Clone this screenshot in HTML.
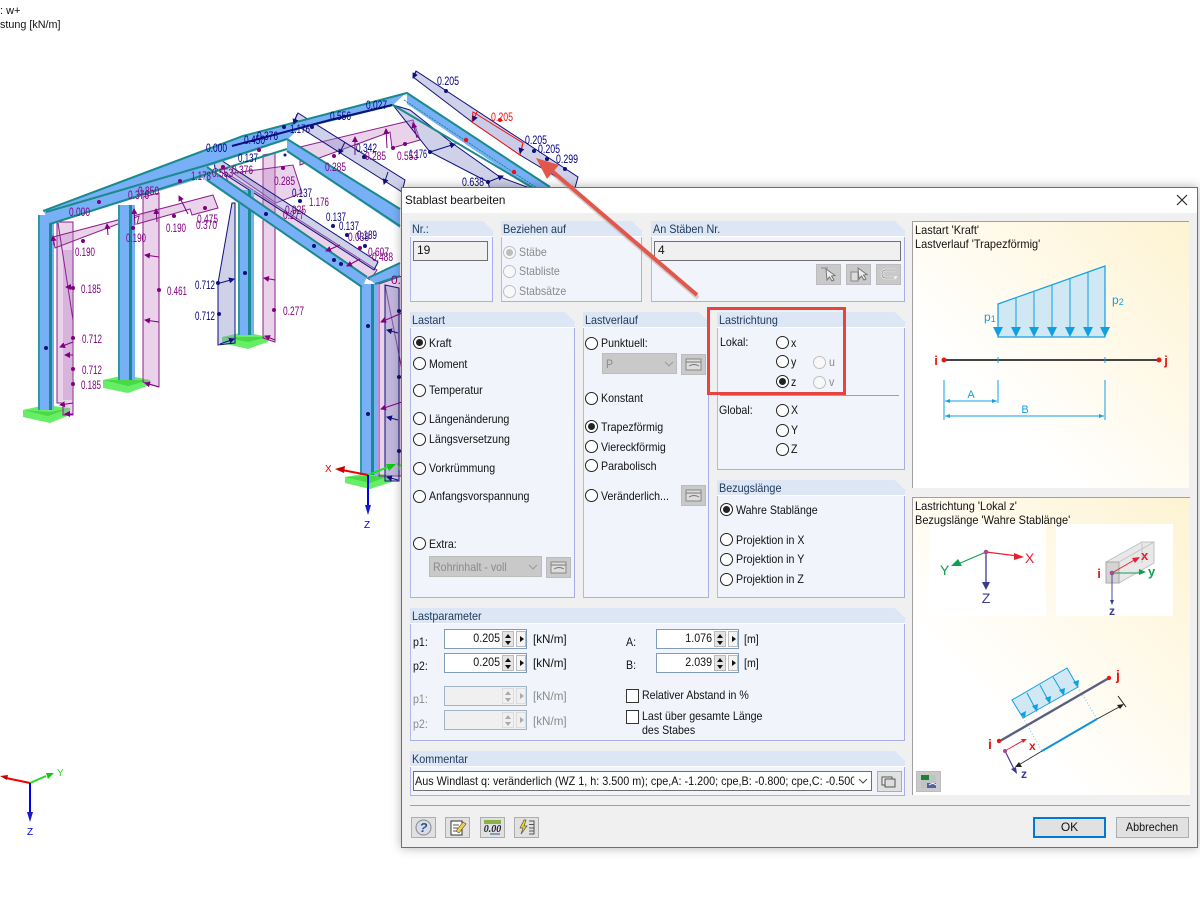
<!DOCTYPE html>
<html lang="de"><head><meta charset="utf-8"><title>Stablast bearbeiten</title>
<style>
html,body{margin:0;padding:0;background:#fff}
body{position:relative;width:1200px;height:900px;overflow:hidden;font-family:"Liberation Sans",sans-serif;font-size:12px;color:#111}
svg{position:absolute;left:0;top:0}
.a{position:absolute}
.t{position:absolute;line-height:14px;white-space:nowrap;transform:scaleX(.885);transform-origin:0 50%}
.v{transform:scaleX(.915)}
.u{transform:scaleX(.97)}
.d{color:#8a8a8a}
.p{position:absolute;box-sizing:border-box;background:#f1f4fa;border-left:1px solid #b3b8ea;border-right:1px solid #a9aee6;border-bottom:1px solid #a9aee6;clip-path:polygon(0 0,calc(100% - 10px) 0,100% 10px,100% 100%,0 100%)}
.h{position:absolute;left:-1px;right:-1px;top:0;height:15px;background:#dce6f4;border-bottom:1px solid #fff;color:#1e3a5a;line-height:16px;padding-left:2px}
.h span{display:inline-block;transform:scaleX(.9);transform-origin:0 50%;white-space:nowrap}
.r{position:absolute;box-sizing:border-box;width:13px;height:13px;border:1px solid #222;border-radius:50%;background:#fff}
.r.x{border-color:#c0c0c0;background:#f8f8f8}
.r.s:after{content:"";position:absolute;left:2px;top:2px;width:7px;height:7px;border-radius:50%;background:#222}
.r.x.s:after{background:#bdbdbd}
.f{position:absolute;box-sizing:border-box;border:1px solid #707070;background:#f0f0f0;line-height:17px;padding-left:3px;height:20px}
.b{position:absolute;box-sizing:border-box;width:25px;height:21px;background:#c9c9c9;border:1px solid #bcbcbc}
.e{background:#e1e1e1;border-color:#adadad}
.n{position:absolute;box-sizing:border-box;width:83px;height:20px;border:1px solid #7f9db9;background:#fff;line-height:17px;text-align:right;padding-right:26px}
.n b{display:inline-block;font-weight:normal;transform:scaleX(.89);transform-origin:100% 50%}
.n.o{background:#f0f0f0;border-color:#a0b4c8}
.sp{position:absolute;left:57px;top:1px;width:12px;height:16px;background:#e4e4e4;border:1px solid #bbb;box-sizing:border-box}
.sp i{position:absolute;left:2px;width:0;height:0;border-left:3px solid transparent;border-right:3px solid transparent}
.sp i:first-child{top:2px;border-bottom:4px solid #111}
.sp i:last-child{top:9px;border-top:4px solid #111}
.sq{position:absolute;left:71px;top:1px;width:10px;height:16px;background:#f4f4f4;border:1px solid #bbb;box-sizing:border-box}
.sq:after{content:"";position:absolute;left:3px;top:4px;border-left:4px solid #111;border-top:3px solid transparent;border-bottom:3px solid transparent}
.o .sp i:first-child{border-bottom-color:#aaa}.o .sp i:last-child{border-top-color:#aaa}.o .sq:after{border-left-color:#aaa}
.o .sp,.o .sq{border-color:#ddd;background:#f0f0f0}
.cb{position:absolute;box-sizing:border-box;width:13px;height:14px;border:1px solid #333;background:#fff}
.pv{position:absolute;box-sizing:border-box;border-top:1px solid #a0a0a0;border-left:1px solid #a0a0a0;background:linear-gradient(45deg,#fff 30%,#fff9e8 65%,#fdf3d2 100%)}
.btxt{position:absolute;box-sizing:border-box;text-align:center;height:21px;width:73px;line-height:19px;background:#e1e1e1}
.btxt span{display:inline-block;transform:scaleX(.9)}
.s3 text{font-size:11.5px;font-family:"Liberation Sans",sans-serif}
</style></head><body>

<div class="t" style="left:0;top:4px;font-size:11px;transform:none">: w+</div>
<div class="t" style="left:0;top:18px;font-size:11px;transform:scaleX(.98)">stung [kN/m]</div>

<svg class="s3" width="1200" height="900" viewBox="0 0 1200 900">
<defs>
<marker id="ap" markerWidth="7" markerHeight="7" refX="5" refY="3" orient="auto"><path d="M0 0L6 3L0 6Z" fill="#800080"/></marker>
<marker id="an" markerWidth="7" markerHeight="7" refX="5" refY="3" orient="auto"><path d="M0 0L6 3L0 6Z" fill="#10107a"/></marker>
</defs>
<!-- green bases -->
<g fill="#66ee66" stroke="none">
<path d="M23 410L45 405L70 408V415L50 423L23 417Z"/>
<path d="M103 380L125 375L150 380V385L128 393L103 388Z"/>
<path d="M222 337L245 332L268 337V342L248 349L222 343Z"/>
<path d="M345 477L368 473L392 475V482L370 489L345 483Z"/>
</g>
<g fill="#48d848"><path d="M23 410L48 416L70 408L50 412Z"/><path d="M103 380L128 386L150 380Z"/><path d="M222 337L248 342L268 337Z"/><path d="M345 477L370 483L392 475Z"/></g>

<!-- purple loads behind -->
<g fill="#c48ac8" fill-opacity=".38" stroke="#8b1f8b" stroke-width="1">
<path d="M57 222H73V415H63V403H57Z"/>
<path d="M143 197L159 193V387L143 382Z"/>
<path d="M263 155L275 153V342L263 338Z"/>
<path d="M53 237L213 195L218 208L192 215L190 209L137 224L139 216L55 248Z"/>
<path d="M300 147L413 120L420 140L392 148L390 132L300 165Z"/>
<path d="M233 173L293 165L302 193L276 203Z"/>
<path d="M225 172L377 270L370 280L229 186Z"/>
<path d="M379 284L402 276V476H379Z"/>
</g>
<path d="M63 250H73V400H63Z" fill="#b070b8" fill-opacity=".3"/>
<path d="M58 223L73 320" stroke="#8b1f8b" fill="none"/>
<path d="M385 285L402 370" stroke="#8b1f8b" fill="none"/>
<!-- blue loads -->
<g fill="#8a92c8" fill-opacity=".42" stroke="#10107a" stroke-width="1">
<path d="M413 77L416 71L578 177L575 188L520 155L472 122Z"/>
<path d="M298 113L405 180L402 192L293 123Z"/>
<path d="M393 105L410 110L452 143L500 177L535 190H490L488 182L430 152Z"/>
<path d="M232 203H235V343L218 345V283Z"/>
<path d="M385 285L399 288V481H385Z"/>
<path d="M213 155L378 262L374 270L215 168Z"/>
</g>
<path d="M473 112L523 143L520 155L472 122Z" fill="#c8cce6" stroke="#f01010" stroke-width="1"/>

<!-- columns -->
<g>
<rect x="38" y="215" width="16" height="195" fill="#78b0f8"/><rect x="38" y="215" width="2" height="195" fill="#2e9ba0"/><rect x="49" y="215" width="3" height="195" fill="#1b8a8c"/>
<rect x="118" y="205" width="17" height="175" fill="#78b0f8"/><rect x="118" y="205" width="2" height="175" fill="#2e9ba0"/><rect x="129" y="205" width="3" height="175" fill="#1b8a8c"/>
<rect x="238" y="190" width="16" height="145" fill="#78b0f8"/><rect x="238" y="190" width="2" height="145" fill="#2e9ba0"/><rect x="248" y="190" width="3" height="145" fill="#1b8a8c"/>
<rect x="360" y="284" width="18" height="191" fill="#78b0f8"/><rect x="360" y="284" width="2" height="191" fill="#2e9ba0"/><rect x="371" y="284" width="3" height="191" fill="#1b8a8c"/>
</g>
<!-- roof beams -->
<g fill="#78b0f8">
<path d="M43 210L243 136L407 92L393 105L300 128L287 140L207 167L209 176L50 224Z"/>
<path d="M207 167L367 277L362 288L205 180Z"/>
<path d="M287 138L400 209V228L287 152Z"/>
<path d="M407 92L550 187L533 190L407 104Z"/>
<path d="M368 278L400 263V277L375 284Z"/>
</g>
<g fill="none" stroke="#1b8a8c" stroke-width="2">
<path d="M43 211L243 136L407 93L550 187"/>
<path d="M50 224L207 174L287 149"/>
<path d="M46 212L207 165L287 139"/>
<path d="M287 139L400 209"/>
<path d="M287 151L400 226"/>
<path d="M207 167L367 277"/>
<path d="M207 180L362 287"/>
<path d="M300 128L393 105L533 188"/>
<path d="M368 278L400 263"/>
<path d="M375 284L400 276"/>
</g>
<path d="M232 146L330 120L392 105" stroke="#10107a" stroke-width="2" fill="none"/>
<path d="M404 100L540 190" stroke="#1b8a8c" stroke-width="1" fill="none" stroke-dasharray="2 1"/>

<!-- load arrows -->
<g stroke="#800080" stroke-width="1" fill="none">
<path d="M74 287H66" marker-end="url(#ap)"/><path d="M73 342L60 347" marker-end="url(#ap)"/><path d="M73 355H65" marker-end="url(#ap)"/><path d="M73 403L60 405" marker-end="url(#ap)"/><path d="M73 414H65" marker-end="url(#ap)"/>
<path d="M159 257L145 255" marker-end="url(#ap)"/><path d="M159 322L145 320" marker-end="url(#ap)"/><path d="M159 387L145 383" marker-end="url(#ap)"/>
<path d="M275 280L264 278" marker-end="url(#ap)"/><path d="M275 340L265 336" marker-end="url(#ap)"/>
<path d="M108 235L107 224" marker-end="url(#ap)"/><path d="M157 222L156 209" marker-end="url(#ap)"/><path d="M188 214L179 196" marker-end="url(#ap)"/><path d="M135 225L134 209" marker-end="url(#ap)"/><path d="M54 245L53 236" marker-end="url(#ap)"/>
<path d="M355 155L355 137" marker-end="url(#ap)"/><path d="M387 148L386 129" marker-end="url(#ap)"/><path d="M417 138L413 123" marker-end="url(#ap)"/>
<path d="M402 313L381 322" marker-end="url(#ap)"/><path d="M402 402L381 409" marker-end="url(#ap)"/>
<path d="M340 245L326 251" marker-end="url(#ap)"/><path d="M360 259L347 266" marker-end="url(#ap)"/>
</g>
<g stroke="#10107a" stroke-width="1" fill="none">
<path d="M220 283L234 279" marker-end="url(#an)"/><path d="M220 344L234 339" marker-end="url(#an)"/>
<path d="M398 333L387 330" marker-end="url(#an)"/><path d="M398 420L387 417" marker-end="url(#an)"/><path d="M398 480L387 477" marker-end="url(#an)"/>
<path d="M430 152L455 144" marker-end="url(#an)"/><path d="M488 182L503 176" marker-end="url(#an)"/>
<path d="M416 72L413 78" marker-end="url(#an)"/><path d="M477 112L473 121" marker-end="url(#an)" stroke="#f01010"/><path d="M523 143L520 153" marker-end="url(#an)" stroke="#f01010"/>
<path d="M345 142L339 154" marker-end="url(#an)"/><path d="M388 172L384 184" marker-end="url(#an)"/>
<path d="M297 114L294 124" marker-end="url(#an)"/>
</g>

<!-- dots -->
<g fill="#800080">
<circle cx="83" cy="241" r="2"/><circle cx="133" cy="228" r="2"/><circle cx="174" cy="216" r="2"/><circle cx="205" cy="208" r="2"/><circle cx="73" cy="288" r="2"/><circle cx="159" cy="290" r="2"/><circle cx="274" cy="310" r="2"/><circle cx="73" cy="338" r="2"/><circle cx="73" cy="369" r="2"/><circle cx="73" cy="384" r="2"/><circle cx="334" cy="156" r="2"/><circle cx="365" cy="157" r="2"/><circle cx="393" cy="148" r="2"/><circle cx="405" cy="144" r="2"/><circle cx="283" cy="168" r="2"/><circle cx="259" cy="150" r="2"/><circle cx="223" cy="167" r="2"/><circle cx="180" cy="181" r="2"/><circle cx="99" cy="202" r="2"/><circle cx="360" cy="248" r="2"/>
</g>
<g fill="#10107a">
<circle cx="46" cy="348" r="2"/><circle cx="218" cy="283" r="2"/><circle cx="219" cy="314" r="2"/><circle cx="245" cy="273" r="2"/><circle cx="266" cy="214" r="2"/><circle cx="314" cy="246" r="2"/><circle cx="334" cy="260" r="2"/><circle cx="341" cy="264" r="2"/><circle cx="368" cy="326" r="2"/><circle cx="368" cy="414" r="2"/><circle cx="399" cy="311" r="2"/><circle cx="399" cy="377" r="2"/><circle cx="399" cy="451" r="2"/><circle cx="446" cy="91" r="2"/><circle cx="534" cy="151" r="2"/><circle cx="547" cy="159" r="2"/><circle cx="565" cy="169" r="2"/><circle cx="364" cy="157" r="2"/><circle cx="430" cy="152" r="2"/><circle cx="488" cy="182" r="2"/><circle cx="300" cy="201" r="2"/><circle cx="333" cy="226" r="2"/><circle cx="347" cy="235" r="2"/><circle cx="365" cy="246" r="2"/><circle cx="284" cy="127" r="2"/><circle cx="312" cy="127" r="2"/><circle cx="285" cy="155" r="1.5"/>
</g>
<circle cx="500" cy="120" r="2" fill="#f01010"/><circle cx="466" cy="140" r="2.2" fill="#f01010"/><circle cx="514" cy="172" r="2.2" fill="#f01010"/>

<!-- labels purple -->
<g fill="#800080">
<text x="69" y="216" textLength="21" lengthAdjust="spacingAndGlyphs">0.000</text>
<text x="191" y="180" textLength="20" lengthAdjust="spacingAndGlyphs">1.178</text>
<text x="128" y="199" textLength="21" lengthAdjust="spacingAndGlyphs">0.376</text>
<text x="138" y="195" textLength="21" lengthAdjust="spacingAndGlyphs">0.850</text>
<text x="212" y="177" textLength="21" lengthAdjust="spacingAndGlyphs">0.553</text>
<text x="232" y="174" textLength="21" lengthAdjust="spacingAndGlyphs">0.376</text>
<text x="274" y="185" textLength="21" lengthAdjust="spacingAndGlyphs">0.285</text>
<text x="325" y="171" textLength="21" lengthAdjust="spacingAndGlyphs">0.285</text>
<text x="365" y="160" textLength="21" lengthAdjust="spacingAndGlyphs">0.285</text>
<text x="397" y="160" textLength="21" lengthAdjust="spacingAndGlyphs">0.553</text>
<text x="75" y="256" textLength="20" lengthAdjust="spacingAndGlyphs">0.190</text>
<text x="126" y="242" textLength="20" lengthAdjust="spacingAndGlyphs">0.190</text>
<text x="166" y="232" textLength="20" lengthAdjust="spacingAndGlyphs">0.190</text>
<text x="197" y="223" textLength="21" lengthAdjust="spacingAndGlyphs">0.475</text>
<text x="196" y="229" textLength="21" lengthAdjust="spacingAndGlyphs">0.370</text>
<text x="81" y="293" textLength="20" lengthAdjust="spacingAndGlyphs">0.185</text>
<text x="167" y="295" textLength="20" lengthAdjust="spacingAndGlyphs">0.461</text>
<text x="283" y="315" textLength="21" lengthAdjust="spacingAndGlyphs">0.277</text>
<text x="82" y="343" textLength="20" lengthAdjust="spacingAndGlyphs">0.712</text>
<text x="82" y="374" textLength="20" lengthAdjust="spacingAndGlyphs">0.712</text>
<text x="81" y="389" textLength="20" lengthAdjust="spacingAndGlyphs">0.185</text>
<text x="309" y="206" textLength="20" lengthAdjust="spacingAndGlyphs">1.176</text>
<text x="285" y="214" textLength="21" lengthAdjust="spacingAndGlyphs">0.925</text>
<text x="283" y="219" textLength="21" lengthAdjust="spacingAndGlyphs">0.277</text>
<text x="368" y="256" textLength="21" lengthAdjust="spacingAndGlyphs">0.607</text>
<text x="372" y="261" textLength="21" lengthAdjust="spacingAndGlyphs">0.488</text>
<text x="348" y="241" textLength="21" lengthAdjust="spacingAndGlyphs">0.038</text>
<text x="391" y="284" textLength="10" lengthAdjust="spacingAndGlyphs">0.</text>
</g>
<!-- labels navy -->
<g fill="#000080">
<text x="206" y="152" textLength="21" lengthAdjust="spacingAndGlyphs">0.000</text>
<text x="244" y="144" textLength="21" lengthAdjust="spacingAndGlyphs">0.450</text>
<text x="257" y="140" textLength="21" lengthAdjust="spacingAndGlyphs">0.376</text>
<text x="238" y="162" textLength="20" lengthAdjust="spacingAndGlyphs">0.137</text>
<text x="290" y="133" textLength="20" lengthAdjust="spacingAndGlyphs">1.176</text>
<text x="330" y="120" textLength="21" lengthAdjust="spacingAndGlyphs">0.556</text>
<text x="366" y="109" textLength="21" lengthAdjust="spacingAndGlyphs">0.027</text>
<text x="356" y="152" textLength="21" lengthAdjust="spacingAndGlyphs">0.342</text>
<text x="292" y="197" textLength="20" lengthAdjust="spacingAndGlyphs">0.137</text>
<text x="326" y="221" textLength="20" lengthAdjust="spacingAndGlyphs">0.137</text>
<text x="339" y="230" textLength="20" lengthAdjust="spacingAndGlyphs">0.137</text>
<text x="357" y="239" textLength="20" lengthAdjust="spacingAndGlyphs">0.189</text>
<text x="195" y="289" textLength="20" lengthAdjust="spacingAndGlyphs">0.712</text>
<text x="195" y="320" textLength="20" lengthAdjust="spacingAndGlyphs">0.712</text>
<text x="437" y="85" textLength="22" lengthAdjust="spacingAndGlyphs">0.205</text>
<text x="525" y="144" textLength="22" lengthAdjust="spacingAndGlyphs">0.205</text>
<text x="538" y="153" textLength="22" lengthAdjust="spacingAndGlyphs">0.205</text>
<text x="556" y="163" textLength="22" lengthAdjust="spacingAndGlyphs">0.299</text>
<text x="462" y="186" textLength="22" lengthAdjust="spacingAndGlyphs">0.638</text>
<text x="409" y="158" textLength="18" lengthAdjust="spacingAndGlyphs">1.176</text>
</g>
<text x="491" y="121" fill="#f01010" textLength="22" lengthAdjust="spacingAndGlyphs">0.205</text>

<!-- global axes right -->
<path d="M368 475L342 470" stroke="#f00000" stroke-width="2"/><path d="M335 469L345 466L344 473Z" fill="#c80000"/>
<path d="M368 475L388 467" stroke="#20e020" stroke-width="2"/><path d="M396 464L386 464L389 471Z" fill="#10c810"/>
<path d="M368 475V505" stroke="#0000f0" stroke-width="2"/><path d="M365 505H371L368 515Z" fill="#1818c8"/>
<text x="325" y="472" fill="#f00000" style="font-size:10px">X</text>
<text x="364" y="528" fill="#0000f0" style="font-size:10px">Z</text>
<text x="396" y="470" fill="#20e020" style="font-size:10px">Y</text>
<!-- axes left -->
<path d="M30 783L6 778" stroke="#f00000" stroke-width="2"/><path d="M0 776L8 775L7 780Z" fill="#c80000"/>
<path d="M30 783L46 776" stroke="#20e020" stroke-width="2"/><path d="M54 773L46 773L48 779Z" fill="#10c810"/>
<path d="M30 783V812" stroke="#0000f0" stroke-width="2"/><path d="M27 812H33L30 822Z" fill="#1818c8"/>
<text x="57" y="776" fill="#20e020" style="font-size:10px">Y</text>
<text x="27" y="835" fill="#0000f0" style="font-size:10px">Z</text>
</svg>

<!-- DIALOG -->
<div class="a" style="left:401px;top:187px;width:797px;height:661px;box-sizing:border-box;border:1px solid #707070;background:#f0f0f0;box-shadow:0 0 10px rgba(0,0,0,.3)"></div>
<div class="a" style="left:402px;top:188px;width:795px;height:25px;background:#fff"></div>
<div class="t" style="left:405px;top:193px;transform:scaleX(.97)">Stablast bearbeiten</div>
<svg width="1200" height="900" style="pointer-events:none"><path d="M1177 195L1187 205M1187 195L1177 205" stroke="#222" stroke-width="1.1" fill="none"/></svg>

<!-- Nr -->
<div class="p" style="left:410px;top:221px;width:83px;height:81px"><div class="h"><span>Nr.:</span></div></div>
<div class="f" style="left:413px;top:241px;width:75px">19</div>
<!-- Beziehen auf -->
<div class="p" style="left:501px;top:221px;width:141px;height:81px"><div class="h"><span>Beziehen auf</span></div></div>
<div class="r x s" style="left:503px;top:246px"></div><div class="t d" style="left:519px;top:245px">Stäbe</div>
<div class="r x" style="left:503px;top:265px"></div><div class="t d" style="left:519px;top:264px">Stabliste</div>
<div class="r x" style="left:503px;top:285px"></div><div class="t d" style="left:519px;top:284px">Stabsätze</div>
<!-- An Stäben -->
<div class="p" style="left:651px;top:221px;width:254px;height:81px"><div class="h"><span>An Stäben Nr.</span></div></div>
<div class="f" style="left:654px;top:241px;width:247px">4</div>
<div class="b" style="left:816px;top:264px"><svg width="23" height="19"><path d="M9 4L10 15L12.5 12L15 16L17 15L14.5 11L18 10.5Z" fill="#eee" stroke="#777"/><path d="M4 3H11" stroke="#888"/></svg></div>
<div class="b" style="left:846px;top:264px"><svg width="23" height="19"><rect x="4" y="7" width="7" height="9" fill="#ddd" stroke="#888"/><path d="M11 3L12 14L14.5 11L17 15L19 14L16.5 10L20 9.5Z" fill="#eee" stroke="#777"/></svg></div>
<div class="b" style="left:876px;top:264px"><svg width="23" height="19"><path d="M19 5H9Q5 5 5 9T9 13H17Q19 13 19 11" fill="none" stroke="#eee" stroke-width="2.4"/><path d="M19 5H9Q5 5 5 9T9 13H17" fill="none" stroke="#888" stroke-width=".8"/></svg></div>

<!-- Lastart -->
<div class="p" style="left:410px;top:312px;width:165px;height:286px"><div class="h"><span>Lastart</span></div></div>
<div class="r s" style="left:413px;top:336px"></div><div class="t" style="left:429px;top:336px">Kraft</div>
<div class="r" style="left:413px;top:357px"></div><div class="t" style="left:429px;top:357px">Moment</div>
<div class="r" style="left:413px;top:384px"></div><div class="t" style="left:429px;top:383px">Temperatur</div>
<div class="r" style="left:413px;top:412px"></div><div class="t" style="left:429px;top:412px">Längenänderung</div>
<div class="r" style="left:413px;top:433px"></div><div class="t" style="left:429px;top:432px">Längsversetzung</div>
<div class="r" style="left:413px;top:462px"></div><div class="t" style="left:429px;top:461px">Vorkrümmung</div>
<div class="r" style="left:413px;top:490px"></div><div class="t" style="left:429px;top:489px">Anfangsvorspannung</div>
<div class="r" style="left:413px;top:537px"></div><div class="t" style="left:429px;top:537px">Extra:</div>
<div class="a" style="left:429px;top:556px;width:113px;height:21px;background:#c9c9c9;border:1px solid #bcbcbc;box-sizing:border-box"></div>
<div class="t d" style="left:433px;top:560px">Rohrinhalt - voll</div>
<svg width="1200" height="900"><path d="M529 565L533 569L537 565" fill="none" stroke="#999"/></svg>
<div class="b" style="left:546px;top:557px"><svg width="23" height="19"><rect x="4" y="4" width="15" height="11" fill="#ddd" stroke="#888"/><path d="M4 7H19" stroke="#777"/><path d="M7 11Q12 8 17 11" stroke="#777" fill="none"/></svg></div>

<!-- Lastverlauf -->
<div class="p" style="left:583px;top:312px;width:126px;height:286px"><div class="h"><span>Lastverlauf</span></div></div>
<div class="r" style="left:585px;top:337px"></div><div class="t" style="left:601px;top:336px">Punktuell:</div>
<div class="a" style="left:602px;top:353px;width:75px;height:21px;background:#c9c9c9;border:1px solid #bcbcbc;box-sizing:border-box"></div>
<div class="t d" style="left:606px;top:357px">P</div>
<svg width="1200" height="900"><path d="M665 362L669 366L673 362" fill="none" stroke="#999"/></svg>
<div class="b" style="left:681px;top:354px"><svg width="23" height="19"><rect x="4" y="4" width="15" height="11" fill="#ddd" stroke="#888"/><path d="M4 7H19" stroke="#777"/><path d="M7 11Q12 8 17 11" stroke="#777" fill="none"/></svg></div>
<div class="r" style="left:585px;top:392px"></div><div class="t" style="left:601px;top:391px">Konstant</div>
<div class="r s" style="left:585px;top:420px"></div><div class="t" style="left:601px;top:420px">Trapezförmig</div>
<div class="r" style="left:585px;top:440px"></div><div class="t" style="left:601px;top:440px">Viereckförmig</div>
<div class="r" style="left:585px;top:459px"></div><div class="t" style="left:601px;top:459px">Parabolisch</div>
<div class="r" style="left:585px;top:489px"></div><div class="t" style="left:601px;top:489px">Veränderlich...</div>
<div class="b" style="left:681px;top:485px"><svg width="23" height="19"><rect x="4" y="4" width="15" height="11" fill="#ddd" stroke="#888"/><path d="M4 7H19" stroke="#777"/><path d="M7 11Q12 8 17 11" stroke="#777" fill="none"/></svg></div>

<!-- Lastrichtung -->
<div class="p" style="left:717px;top:312px;width:188px;height:158px"><div class="h"><span>Lastrichtung</span></div></div>
<div class="t" style="left:720px;top:335px">Lokal:</div>
<div class="r" style="left:776px;top:336px"></div><div class="t" style="left:791px;top:336px">x</div>
<div class="r" style="left:776px;top:355px"></div><div class="t" style="left:791px;top:355px">y</div>
<div class="r s" style="left:776px;top:375px"></div><div class="t" style="left:791px;top:375px">z</div>
<div class="r x" style="left:813px;top:356px"></div><div class="t d" style="left:829px;top:355px">u</div>
<div class="r x" style="left:813px;top:376px"></div><div class="t d" style="left:829px;top:375px">v</div>
<div class="a" style="left:720px;top:395px;width:179px;height:1px;background:#a0a0a0"></div>
<div class="t" style="left:719px;top:403px">Global:</div>
<div class="r" style="left:776px;top:404px"></div><div class="t" style="left:791px;top:403px">X</div>
<div class="r" style="left:776px;top:424px"></div><div class="t" style="left:791px;top:423px">Y</div>
<div class="r" style="left:776px;top:443px"></div><div class="t" style="left:791px;top:442px">Z</div>

<!-- Bezugslänge -->
<div class="p" style="left:717px;top:480px;width:188px;height:118px"><div class="h"><span>Bezugslänge</span></div></div>
<div class="r s" style="left:720px;top:503px"></div><div class="t" style="left:736px;top:503px">Wahre Stablänge</div>
<div class="r" style="left:720px;top:533px"></div><div class="t" style="left:736px;top:533px">Projektion in X</div>
<div class="r" style="left:720px;top:553px"></div><div class="t" style="left:736px;top:552px">Projektion in Y</div>
<div class="r" style="left:720px;top:573px"></div><div class="t" style="left:736px;top:572px">Projektion in Z</div>

<!-- Lastparameter -->
<div class="p" style="left:410px;top:608px;width:495px;height:133px"><div class="h"><span>Lastparameter</span></div></div>
<div class="t" style="left:413px;top:635px">p1:</div>
<div class="n" style="left:444px;top:629px"><b>0.205</b><span class="sp"><i></i><i></i></span><span class="sq"></span></div>
<div class="t u" style="left:533px;top:632px">[kN/m]</div>
<div class="t" style="left:413px;top:659px">p2:</div>
<div class="n" style="left:444px;top:653px"><b>0.205</b><span class="sp"><i></i><i></i></span><span class="sq"></span></div>
<div class="t u" style="left:533px;top:656px">[kN/m]</div>
<div class="t d" style="left:413px;top:692px">p1:</div>
<div class="n o" style="left:444px;top:686px"><span class="sp"><i></i><i></i></span><span class="sq"></span></div>
<div class="t u d" style="left:533px;top:689px">[kN/m]</div>
<div class="t d" style="left:413px;top:717px">p2:</div>
<div class="n o" style="left:444px;top:710px"><span class="sp"><i></i><i></i></span><span class="sq"></span></div>
<div class="t u d" style="left:533px;top:714px">[kN/m]</div>
<div class="t" style="left:626px;top:635px">A:</div>
<div class="n" style="left:656px;top:629px"><b>1.076</b><span class="sp"><i></i><i></i></span><span class="sq"></span></div>
<div class="t" style="left:744px;top:632px">[m]</div>
<div class="t" style="left:626px;top:658px">B:</div>
<div class="n" style="left:656px;top:653px"><b>2.039</b><span class="sp"><i></i><i></i></span><span class="sq"></span></div>
<div class="t" style="left:744px;top:656px">[m]</div>
<div class="cb" style="left:626px;top:689px"></div><div class="t" style="left:642px;top:688px">Relativer Abstand in %</div>
<div class="cb" style="left:626px;top:710px"></div><div class="t" style="left:642px;top:709px">Last über gesamte Länge</div>
<div class="t" style="left:642px;top:723px">des Stabes</div>

<!-- Kommentar -->
<div class="p" style="left:410px;top:751px;width:495px;height:45px"><div class="h"><span>Kommentar</span></div></div>
<div class="a" style="left:413px;top:771px;width:459px;height:20px;box-sizing:border-box;border:1px solid #707070;background:#fff"></div>
<div class="t" style="left:415px;top:774px;width:488px;overflow:hidden;transform:scaleX(.9)">Aus Windlast q: veränderlich (WZ 1, h: 3.500 m); cpe,A: -1.200; cpe,B: -0.800; cpe,C: -0.500</div>
<svg width="1200" height="900"><path d="M859 779L863 783L867 779" fill="none" stroke="#444"/></svg>
<div class="b e" style="left:877px;top:771px"><svg width="23" height="19"><rect x="4" y="5" width="10" height="8" fill="#eee" stroke="#555"/><rect x="7" y="7" width="10" height="8" fill="#ddd" stroke="#555"/></svg></div>

<div class="a" style="left:410px;top:805px;width:780px;height:1px;background:#a0a0a0"></div>

<!-- bottom buttons -->
<div class="b e" style="left:411px;top:817px"><svg width="23" height="19"><circle cx="11.5" cy="9.5" r="7.5" fill="#d8dce8" stroke="#888"/><text x="11.5" y="14" text-anchor="middle" font-family="Liberation Sans,sans-serif" font-weight="bold" font-style="italic" font-size="13" fill="#2a4f8a">?</text></svg></div>
<div class="b e" style="left:445px;top:817px"><svg width="23" height="19"><rect x="5" y="3" width="11" height="14" fill="#fff" stroke="#333"/><path d="M7 7H13M7 10H12M7 13H11" stroke="#555"/><path d="M10 13L17 4L20 6L13 15Z" fill="#f4d040" stroke="#444" stroke-width=".6"/></svg></div>
<div class="b e" style="left:480px;top:817px"><svg width="23" height="19"><rect x="3" y="2" width="17" height="4" fill="#8ab04a"/><text x="11.5" y="14" text-anchor="middle" font-family="Liberation Serif,serif" font-weight="bold" font-style="italic" font-size="10" fill="#223">0.00</text><path d="M9 16H19" stroke="#2a4fa0"/></svg></div>
<div class="b e" style="left:514px;top:817px"><svg width="23" height="19"><path d="M9 2L5 10H8L6 16L12 8H9L11 2Z" fill="#f0d820" stroke="#555" stroke-width=".7"/><path d="M14 3H19V16H14M14 6.5H19M14 10H19M14 13H19" fill="none" stroke="#555"/></svg></div>
<div class="btxt" style="left:1033px;top:817px;border:2px solid #0078d7;line-height:17px">OK</div>
<div class="btxt" style="left:1116px;top:817px;border:1px solid #adadad"><span>Abbrechen</span></div>

<!-- Preview top -->
<div class="pv" style="left:912px;top:221px;width:277px;height:267px"></div>
<div class="t v" style="left:915px;top:223px">Lastart 'Kraft'</div>
<div class="t v" style="left:915px;top:237px">Lastverlauf 'Trapezförmig'</div>
<svg width="1200" height="900">
<path d="M998 304L1105 266V337H998Z" fill="#cfe8f4"/>
<path d="M998 304L1105 266V337H998Z" fill="none" stroke="#10a0e0" stroke-width="1.2"/>
<g stroke="#10a0e0" stroke-width="1"><path d="M1016 298V330M1034 292V330M1052 285V330M1070 279V330M1088 272V330"/></g>
<g fill="#10a0e0"><path d="M993 327H1003L998 337Z"/><path d="M1011 327H1021L1016 337Z"/><path d="M1029 327H1039L1034 337Z"/><path d="M1047 327H1057L1052 337Z"/><path d="M1065 327H1075L1070 337Z"/><path d="M1083 327H1093L1088 337Z"/><path d="M1100 327H1110L1105 337Z"/></g>
<path d="M944 360H1159" stroke="#444" stroke-width="2"/>
<circle cx="944" cy="360" r="2.5" fill="#e81818"/><circle cx="1159" cy="360" r="2.5" fill="#e81818"/>
<path d="M998 357V363M1105 357V363" stroke="#10a0e0"/>
<text x="936" y="365" text-anchor="middle" font-family="Liberation Sans,sans-serif" font-weight="bold" font-size="13" fill="#e81818">i</text>
<text x="1166" y="365" text-anchor="middle" font-family="Liberation Sans,sans-serif" font-weight="bold" font-size="13" fill="#e81818">j</text>
<g stroke="#10a0e0" fill="none"><path d="M944 380V420M998 380V403M1105 380V420M945 401H997M945 416H1104"/></g>
<g fill="#10a0e0"><path d="M945 401L950 399V403Z"/><path d="M997 401L992 399V403Z"/><path d="M945 416L950 414V418Z"/><path d="M1104 416L1099 414V418Z"/></g>
<g font-family="Liberation Sans,sans-serif" font-size="11" fill="#10a0e0">
<text x="971" y="398" text-anchor="middle">A</text><text x="1025" y="413" text-anchor="middle">B</text>
<text x="984" y="321" font-size="12">p<tspan font-size="9" dy="1">1</tspan></text>
<text x="1112" y="304" font-size="12">p<tspan font-size="9" dy="1">2</tspan></text>
</g>
</svg>

<!-- Preview bottom -->
<div class="pv" style="left:912px;top:497px;width:278px;height:298px"></div>
<div class="a" style="left:929px;top:524px;width:117px;height:92px;background:#fff"></div>
<div class="a" style="left:1056px;top:524px;width:117px;height:92px;background:#fff"></div>
<div class="t v" style="left:915px;top:499px">Lastrichtung 'Lokal z'</div>
<div class="t v" style="left:915px;top:513px">Bezugslänge 'Wahre Stablänge'</div>
<svg width="1200" height="900" font-family="Liberation Sans,sans-serif">
<path d="M986 552L1018 556" stroke="#e82030" stroke-width="1.2"/><path d="M1024 557L1014 553L1014 560Z" fill="#e82030"/>
<path d="M986 552L958 564" stroke="#10a050" stroke-width="1.2"/><path d="M951 566L958 559L962 566Z" fill="#10a050"/>
<path d="M986 552V582" stroke="#4a4a9a" stroke-width="1.4"/><path d="M982 582H990L986 590Z" fill="#3a3a90"/>
<circle cx="986" cy="552" r="2.3" fill="#a84890"/>
<text x="1025" y="563" font-size="14" fill="#e82030">X</text>
<text x="940" y="575" font-size="14" fill="#10a050">Y</text>
<text x="986" y="603" font-size="14" fill="#3a3a90" text-anchor="middle">Z</text>

<path d="M1106 562L1142 542H1154V563L1119 583H1106Z" fill="#e8e8e8" stroke="#c0c0c0"/>
<rect x="1106" y="562" width="13" height="21" fill="#d4d4d4" stroke="#a8a8a8"/>
<path d="M1119 562L1154 542M1142 542V563" stroke="#c4c4c4" fill="none"/>
<path d="M1112 573L1136 559" stroke="#e82030"/><path d="M1140 557L1132 558L1135 563Z" fill="#e82030"/>
<path d="M1112 573H1141" stroke="#10a050"/><path d="M1146 572L1139 569V575Z" fill="#10a050"/>
<path d="M1112 573V601" stroke="#4a4a9a"/><path d="M1110 600H1114L1112 605Z" fill="#3a3a90"/>
<circle cx="1112" cy="573" r="2.3" fill="#a84890"/>
<text x="1141" y="560" font-size="13" fill="#e82030" font-weight="bold">x</text>
<text x="1148" y="576" font-size="13" fill="#10a050" font-weight="bold">y</text>
<text x="1112" y="615" font-size="12" fill="#3a3a90" font-weight="bold" text-anchor="middle">z</text>
<text x="1099" y="578" font-size="13" fill="#e81818" font-weight="bold" text-anchor="middle">i</text>

<path d="M1012 700L1067 668L1078 687L1023 718Z" fill="#cfe8f4" stroke="#10a0e0"/>
<g stroke="#10a0e0" fill="none"><path d="M1027 693L1035 708M1040 685L1048 700M1053 677L1062 692"/></g>
<g fill="#10a0e0"><path d="M1020 714L1025 718L1026 711Z"/><path d="M1032 706L1037 712L1038 704Z"/><path d="M1045 698L1050 704L1051 696Z"/><path d="M1059 690L1064 696L1065 688Z"/><path d="M1073 682L1078 688L1079 680Z"/></g>
<path d="M1000 741L1109 678" stroke="#5a5f80" stroke-width="2.4"/>
<circle cx="999" cy="741" r="2.2" fill="#e81818"/><circle cx="1109" cy="678" r="2.2" fill="#e81818"/>
<text x="990" y="749" font-size="14" fill="#e81818" font-weight="bold" text-anchor="middle">i</text>
<text x="1118" y="680" font-size="14" fill="#e81818" font-weight="bold" text-anchor="middle">j</text>
<path d="M1023 718L1042 751M1078 687L1097 719" stroke="#70c0e0" stroke-dasharray="1 2" fill="none"/>
<path d="M1042 751L1097 719" stroke="#1090e0" stroke-width="2"/>
<path d="M1097 719L1121 706M1042 751L1017 766" stroke="#222" stroke-width=".8"/>
<path d="M1124 704L1117 705L1120 709Z" fill="#222"/><path d="M1015 767L1022 767L1019 762Z" fill="#222"/>
<path d="M1118 696L1126 707" stroke="#222"/>
<path d="M1005 751L1024 740" stroke="#e82030"/><path d="M1027 739L1021 739L1023 743Z" fill="#e82030"/>
<path d="M1005 751L1014 769" stroke="#4a3a9a" stroke-width="1.2"/><path d="M1017 774L1011 769L1016 767Z" fill="#3a3a90"/>
<circle cx="1005" cy="751" r="2" fill="#a84890"/>
<text x="1029" y="750" font-size="12" fill="#e81818" font-weight="bold">x</text>
<text x="1021" y="778" font-size="12" fill="#3a3a90" font-weight="bold">z</text>
</svg>
<div class="b" style="left:916px;top:771px"><svg width="23" height="19"><rect x="4" y="3" width="15" height="13" fill="#bcc4c4"/><rect x="4" y="3" width="8" height="5" fill="#208030"/><path d="M10 11H19V16H10Z" fill="#5060a0"/><path d="M12 13Q16 10 19 13" stroke="#fff" fill="none"/></svg></div>

<!-- red annotations -->
<svg width="1200" height="900">
<path d="M697 296L552 172" stroke="#a09090" stroke-opacity=".4" stroke-width="4" transform="translate(1,2)"/>
<path d="M697 295L552 171" stroke="#e2574c" stroke-width="4"/>
<path d="M536 158L559 165L547 179Z" fill="#e2574c"/>
<rect x="708.5" y="308.5" width="136" height="85" fill="none" stroke="#e8443f" stroke-width="3"/>
</svg>
</body></html>
